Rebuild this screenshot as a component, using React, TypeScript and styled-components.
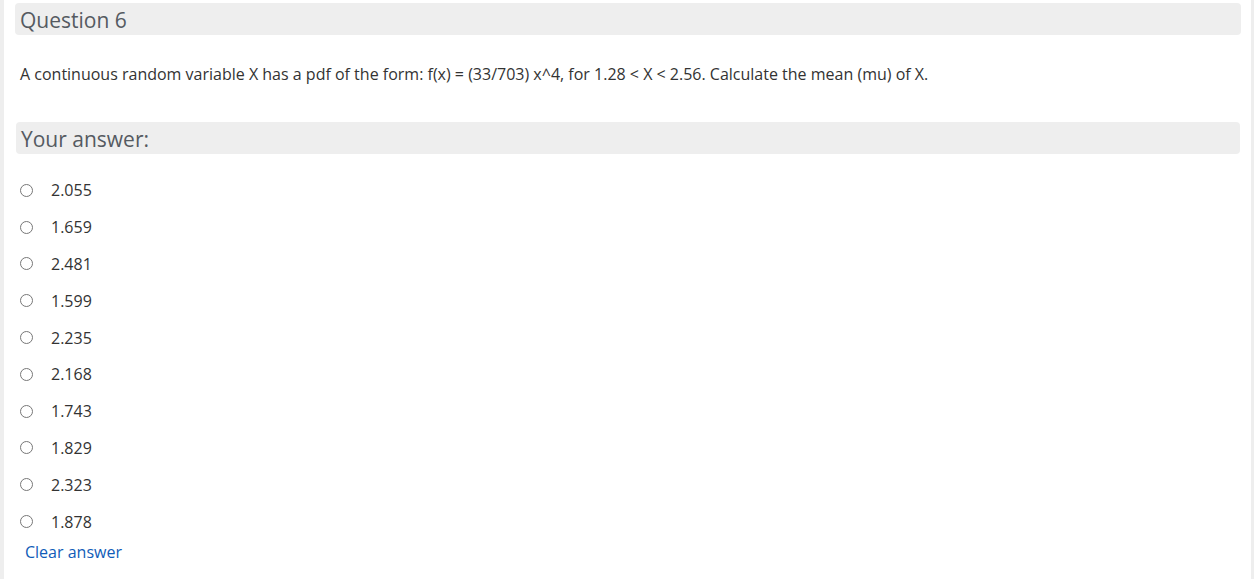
import styled, { createGlobalStyle } from "styled-components";

const Global = createGlobalStyle`
  html, body { margin: 0; padding: 0; background: #fff; }
  body { font-family: "Open Sans", "Liberation Sans", sans-serif; color: #333; }
`;

const Page = styled.div`
  box-sizing: border-box;
  height: 579px;
  border-left: 4px solid #eeeeee;
  border-right: 3px solid #eeeeee;
  padding: 3px 10px 0 11px;
  overflow: hidden;
`;

const Heading = styled.h3<{ $inset?: number }>`
  box-sizing: border-box;
  margin: 0 ${(p) => p.$inset ?? 0}px;
  height: 32px;
  padding: 1px 0 0 5px;
  background: #eeeeee;
  border-radius: 4px;
  font-size: 21px;
  font-weight: 400;
  line-height: 32px;
  color: #555a61;
`;

const QuestionText = styled.p`
  margin: 28px 0 0 5px;
  font-size: 16px;
  line-height: 22px;
  color: #333;
`;

const AnswerHeading = styled(Heading)`
  margin-top: 37px;
`;

const Options = styled.div`
  margin-top: 18px;
  display: flex;
  flex-direction: column;
`;

const Option = styled.label`
  display: flex;
  align-items: center;
  height: 36.8px;
  font-size: 16px;
  color: #333;
`;

const Radio = styled.span`
  box-sizing: border-box;
  width: 13px;
  height: 13px;
  margin-left: 5px;
  margin-right: 18px;
  border: 1px solid #777;
  border-radius: 50%;
`;

const ClearLink = styled.a`
  display: block;
  margin: 1px 0 0 10px;
  font-size: 16px;
  line-height: 22px;
  color: #0f5cb8;
  text-decoration: none;
`;

const answers = ["2.055", "1.659", "2.481", "1.599", "2.235", "2.168", "1.743", "1.829", "2.323", "1.878"];

export default function App() {
  return (
    <Page>
      <Global />
      <Heading>Question 6</Heading>
      <QuestionText>
        A continuous random variable X has a pdf of the form: f(x) = (33/703) x^4, for 1.28 &lt; X &lt; 2.56. Calculate the mean (mu) of X.
      </QuestionText>
      <AnswerHeading $inset={1}>Your answer:</AnswerHeading>
      <Options>
        {answers.map((a) => (
          <Option key={a}>
            <Radio />
            {a}
          </Option>
        ))}
      </Options>
      <ClearLink href="#">Clear answer</ClearLink>
    </Page>
  );
}
